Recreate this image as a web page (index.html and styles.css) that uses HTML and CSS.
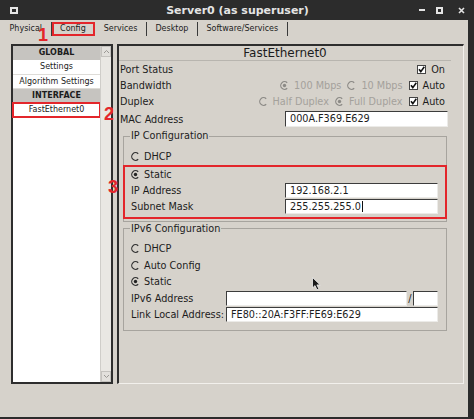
FILE: index.html
```html
<!DOCTYPE html>
<html>
<head>
  <meta charset="UTF-8">
  <link rel="stylesheet" href="styles.css">
</head>
<body>
  <div class="screen">
    <div class="titlebar">
      <span class="win-icon"></span>
      <span class="title">Server0 (as superuser)</span>
      <span class="win-btns">
        <span class="btn-min"></span>
        <span class="btn-max"></span>
        <svg class="btn-close" width="7" height="7" viewBox="0 0 7 7"><path d="M1 1 L6 6 M6 1 L1 6" stroke="#e4e4e4" stroke-width="1.6"/></svg>
      </span>
    </div>

    <div class="window">
      <div class="tabs">
        <span class="tab">Physical</span>
        <span class="tab marked">Config</span>
        <span class="tab">Services</span>
        <span class="tab">Desktop</span>
        <span class="tab">Software/Services</span>
      </div>

      <div class="main">
        <div class="list">
          <div class="list-items">
            <div class="list-head">GLOBAL</div>
            <div class="list-item">Settings</div>
            <div class="list-item">Algorithm Settings</div>
            <div class="list-head">INTERFACE</div>
            <div class="list-item marked">FastEthernet0</div>
          </div>
          <div class="scrollbar">
            <span class="scroll-btn"><svg width="7" height="5" viewBox="0 0 7 5"><path d="M1 4 L3.5 1.5 L6 4" fill="none" stroke="#9a9894" stroke-width="1"/></svg></span>
            <span class="scroll-btn"><svg width="7" height="5" viewBox="0 0 7 5"><path d="M1 1 L3.5 3.5 L6 1" fill="none" stroke="#9a9894" stroke-width="1"/></svg></span>
          </div>
        </div>

        <div class="panel">
          <div class="panel-title">FastEthernet0</div>
          <div class="panel-body">
            <div class="row">
              <span>Port Status</span>
              <span class="controls">
                <span class="opt">
                  <svg class="check" width="9" height="9" viewBox="0 0 9 9"><rect x="0.5" y="0.5" width="8" height="8" fill="#fff" stroke="#444"/><path d="M2 4.2 L3.8 6.6 L7.3 1.8" fill="none" stroke="#111" stroke-width="1.6"/></svg>On
                </span>
              </span>
            </div>
            <div class="row">
              <span>Bandwidth</span>
              <span class="controls">
                <span class="opt disabled">
                  <svg class="radio" width="9" height="9" viewBox="0 0 9 9"><path d="M7.2 1.8 A3.8 3.8 0 1 0 7.2 7.2" fill="none" stroke="#8c8a86" stroke-width="1.2"/><circle cx="4.5" cy="4.5" r="1.7" fill="#8c8a86"/></svg>100 Mbps
                </span>
                <span class="opt disabled">
                  <svg class="radio" width="9" height="9" viewBox="0 0 9 9"><path d="M7.2 1.8 A3.8 3.8 0 1 0 7.2 7.2" fill="none" stroke="#8c8a86" stroke-width="1.2"/></svg>10 Mbps
                </span>
                <span class="opt">
                  <svg class="check" width="9" height="9" viewBox="0 0 9 9"><rect x="0.5" y="0.5" width="8" height="8" fill="#fff" stroke="#444"/><path d="M2 4.2 L3.8 6.6 L7.3 1.8" fill="none" stroke="#111" stroke-width="1.6"/></svg>Auto
                </span>
              </span>
            </div>
            <div class="row">
              <span>Duplex</span>
              <span class="controls">
                <span class="opt disabled">
                  <svg class="radio" width="9" height="9" viewBox="0 0 9 9"><path d="M7.2 1.8 A3.8 3.8 0 1 0 7.2 7.2" fill="none" stroke="#8c8a86" stroke-width="1.2"/></svg>Half Duplex
                </span>
                <span class="opt disabled">
                  <svg class="radio" width="9" height="9" viewBox="0 0 9 9"><path d="M7.2 1.8 A3.8 3.8 0 1 0 7.2 7.2" fill="none" stroke="#8c8a86" stroke-width="1.2"/><circle cx="4.5" cy="4.5" r="1.7" fill="#8c8a86"/></svg>Full Duplex
                </span>
                <span class="opt">
                  <svg class="check" width="9" height="9" viewBox="0 0 9 9"><rect x="0.5" y="0.5" width="8" height="8" fill="#fff" stroke="#444"/><path d="M2 4.2 L3.8 6.6 L7.3 1.8" fill="none" stroke="#111" stroke-width="1.6"/></svg>Auto
                </span>
              </span>
            </div>
            <div class="row mac-row">
              <span>MAC Address</span>
              <span class="field mac">000A.F369.E629</span>
            </div>

            <fieldset class="group ipv4">
              <legend>IP Configuration</legend>
              <div class="radio-row">
                <svg class="radio" width="9" height="9" viewBox="0 0 9 9"><path d="M7.2 1.8 A3.8 3.8 0 1 0 7.2 7.2" fill="none" stroke="#333" stroke-width="1.2"/></svg>DHCP
              </div>
              <div class="marked-box">
                <div class="radio-row">
                  <svg class="radio" width="9" height="9" viewBox="0 0 9 9"><path d="M7.2 1.8 A3.8 3.8 0 1 0 7.2 7.2" fill="none" stroke="#333" stroke-width="1.2"/><circle cx="4.5" cy="4.5" r="1.7" fill="#222"/></svg>Static
                </div>
                <div class="field-grid">
                  <span>IP Address</span>
                  <span class="field">192.168.2.1</span>
                  <span>Subnet Mask</span>
                  <span class="field">255.255.255.0<span class="caret"></span></span>
                </div>
              </div>
            </fieldset>

            <fieldset class="group ipv6">
              <legend>IPv6 Configuration</legend>
              <div class="radio-row">
                <svg class="radio" width="9" height="9" viewBox="0 0 9 9"><path d="M7.2 1.8 A3.8 3.8 0 1 0 7.2 7.2" fill="none" stroke="#333" stroke-width="1.2"/></svg>DHCP
              </div>
              <div class="radio-row">
                <svg class="radio" width="9" height="9" viewBox="0 0 9 9"><path d="M7.2 1.8 A3.8 3.8 0 1 0 7.2 7.2" fill="none" stroke="#333" stroke-width="1.2"/></svg>Auto Config
              </div>
              <div class="radio-row">
                <svg class="radio" width="9" height="9" viewBox="0 0 9 9"><path d="M7.2 1.8 A3.8 3.8 0 1 0 7.2 7.2" fill="none" stroke="#333" stroke-width="1.2"/><circle cx="4.5" cy="4.5" r="1.7" fill="#222"/></svg>Static
              </div>
              <div class="v6-grid">
                <span>IPv6 Address</span>
                <span class="v6-addr">
                  <span class="field"></span>
                  <span class="slash">/</span>
                  <span class="field prefix"></span>
                </span>
                <span>Link Local Address:</span>
                <span class="field">FE80::20A:F3FF:FE69:E629</span>
              </div>
            </fieldset>
          </div>
        </div>
      </div>
    </div>

    <!-- red step numbers drawn over the window -->
    <span class="step step-1">1</span>
    <span class="step step-2">2</span>
    <span class="step step-3">3</span>

    <svg class="pointer" width="10" height="14" viewBox="0 0 10 14"><path d="M0.5 0.5 L0.5 11 L3 8.6 L5 12.8 L6.9 11.9 L4.9 7.9 L8.2 7.9 Z" fill="#1a1a1a" stroke="#f0f0f0" stroke-width="0.8"/></svg>
  </div>
</body>
</html>
```

FILE: styles.css
```css
* {
  box-sizing: border-box;
}
body {
  margin: 0;
  background: #2c2c2c;
  font-family: "DejaVu Sans", sans-serif;
  color: #1c1c1c;
}
.screen {
  position: relative;
  width: 474px;
  height: 419px;
}
.titlebar {
  height: 20px;
  display: grid;
  grid-template-columns: 1fr auto 1fr;
  align-items: center;
  padding: 0 9px 0 10px;
  color: #e4e4e4;
}
.win-icon {
  width: 8px;
  height: 7px;
  border: 2px solid #e6e6e6;
  background: #2c2c2c;
}
.title {
  font-weight: bold;
  font-size: 11px;
}
.win-btns {
  justify-self: end;
  display: flex;
  align-items: center;
}
.btn-min {
  width: 6px;
  height: 2px;
  background: #e4e4e4;
  margin-right: 11px;
}
.btn-max {
  width: 7px;
  height: 7px;
  border: 2px solid #e4e4e4;
  background: #2c2c2c;
  margin-right: 15px;
}
.window {
  width: 468px;
  height: 397px;
  background: #d6d2cb;
}
.tabs {
  height: 17px;
  display: flex;
  align-items: center;
  padding-left: 1px;
  font-size: 8px;
}
.tab {
  padding: 0 8.5px;
  line-height: 14px;
  border-right: 1px solid #3a3a3a;
}
.tab.marked {
  outline: 2px solid #e3262b;
  outline-offset: -2px;
}
.main {
  display: flex;
  gap: 4px;
  padding: 7px 0 0 11px;
}
.list {
  width: 102px;
  height: 340px;
  display: flex;
  border: 2px solid #2e2e2e;
  background: #fff;
}
.list-items {
  flex: 1;
  font-size: 8px;
  text-align: center;
}
.list-head,
.list-item {
  height: 14.3px;
  line-height: 13.3px;
  border-bottom: 1px solid #dedcd8;
}
.list-head {
  background: #c6c4c0;
  font-weight: bold;
  border-bottom-color: #c6c4c0;
}
.list-item.marked {
  outline: 2px solid #e3262b;
  outline-offset: -1px;
}
.scrollbar {
  width: 11px;
  display: flex;
  flex-direction: column;
  justify-content: space-between;
  background: #e9e7e3;
  border-left: 1px solid #cfcdc9;
}
.scroll-btn {
  height: 11px;
  display: flex;
  align-items: center;
  justify-content: center;
  background: #e2e0dc;
  border: 1px solid #c4c2be;
}
.panel {
  width: 347px;
  height: 340px;
  border-top: 2px solid #2e2e2e;
  border-left: 2px solid #2e2e2e;
  border-right: 1px solid #f2f0ec;
  border-bottom: 1px solid #f2f0ec;
}
.panel-title {
  height: 15px;
  margin-right: 12px;
  font-size: 12px;
  line-height: 14px;
  text-align: center;
  border-bottom: 1px solid #b8b5af;
}
.panel-body {
  padding: 0 15px 0 1px;
  font-size: 9.7px;
}
.row {
  height: 16px;
  display: flex;
  align-items: center;
  justify-content: space-between;
}
.controls {
  display: flex;
  align-items: center;
  gap: 6px;
  padding-right: 3px;
}
.opt {
  display: inline-flex;
  align-items: center;
  gap: 5px;
}
.opt.disabled {
  color: #a4a19b;
}
.mac-row {
  margin-top: 2px;
}
.field {
  display: block;
  height: 15px;
  padding-left: 4px;
  line-height: 13px;
  background: #fff;
  border-top: 1px solid #3c3c3c;
  border-left: 1px solid #3c3c3c;
  border-right: 1px solid #ecebe8;
  border-bottom: 1px solid #ecebe8;
  white-space: nowrap;
}
.mac {
  width: 163px;
  height: 16px;
}
.caret {
  display: inline-block;
  width: 1px;
  height: 11px;
  margin-left: 1px;
  vertical-align: -2px;
  background: #111;
}
.group {
  margin: 3px 1px 0 3px;
  padding: 7px 8px 2px 7px;
  border: 1px solid #a7a49e;
  min-width: 0;
}
.group legend {
  padding: 0 1px;
  margin-left: -1px;
  line-height: 12px;
}
.radio-row {
  height: 15.5px;
  display: flex;
  align-items: center;
  gap: 4px;
}
.marked-box {
  margin: 0 -9px 0 -8px;
  padding: 0 7px 2px 6px;
  border: 2px solid #e3262b;
}
.marked-box .radio-row {
  height: 16px;
}
.field-grid {
  display: grid;
  grid-template-columns: 154px 1fr;
  grid-auto-rows: 16px;
  align-items: center;
}
.ipv6 {
  margin-top: 1px;
  padding: 6px 8px 7px 7px;
}
.ipv6 .radio-row {
  height: 16.5px;
}
.v6-grid {
  display: grid;
  grid-template-columns: auto 1fr;
  column-gap: 2px;
  grid-auto-rows: 16.5px;
  align-items: center;
}
.v6-addr {
  display: flex;
  align-items: center;
}
.v6-addr .field {
  flex: 1;
}
.v6-addr .prefix {
  flex: none;
  width: 25px;
}
.slash {
  width: 6px;
  text-align: center;
}
.step {
  position: absolute;
  font-family: "Liberation Sans", sans-serif;
  font-weight: bold;
  font-size: 18px;
  line-height: 18px;
  color: #e3262b;
}
.step-1 {
  left: 38px;
  top: 26px;
}
.step-2 {
  left: 104px;
  top: 105px;
}
.step-3 {
  left: 108px;
  top: 178px;
}
.pointer {
  position: absolute;
  left: 312px;
  top: 277px;
}
```
